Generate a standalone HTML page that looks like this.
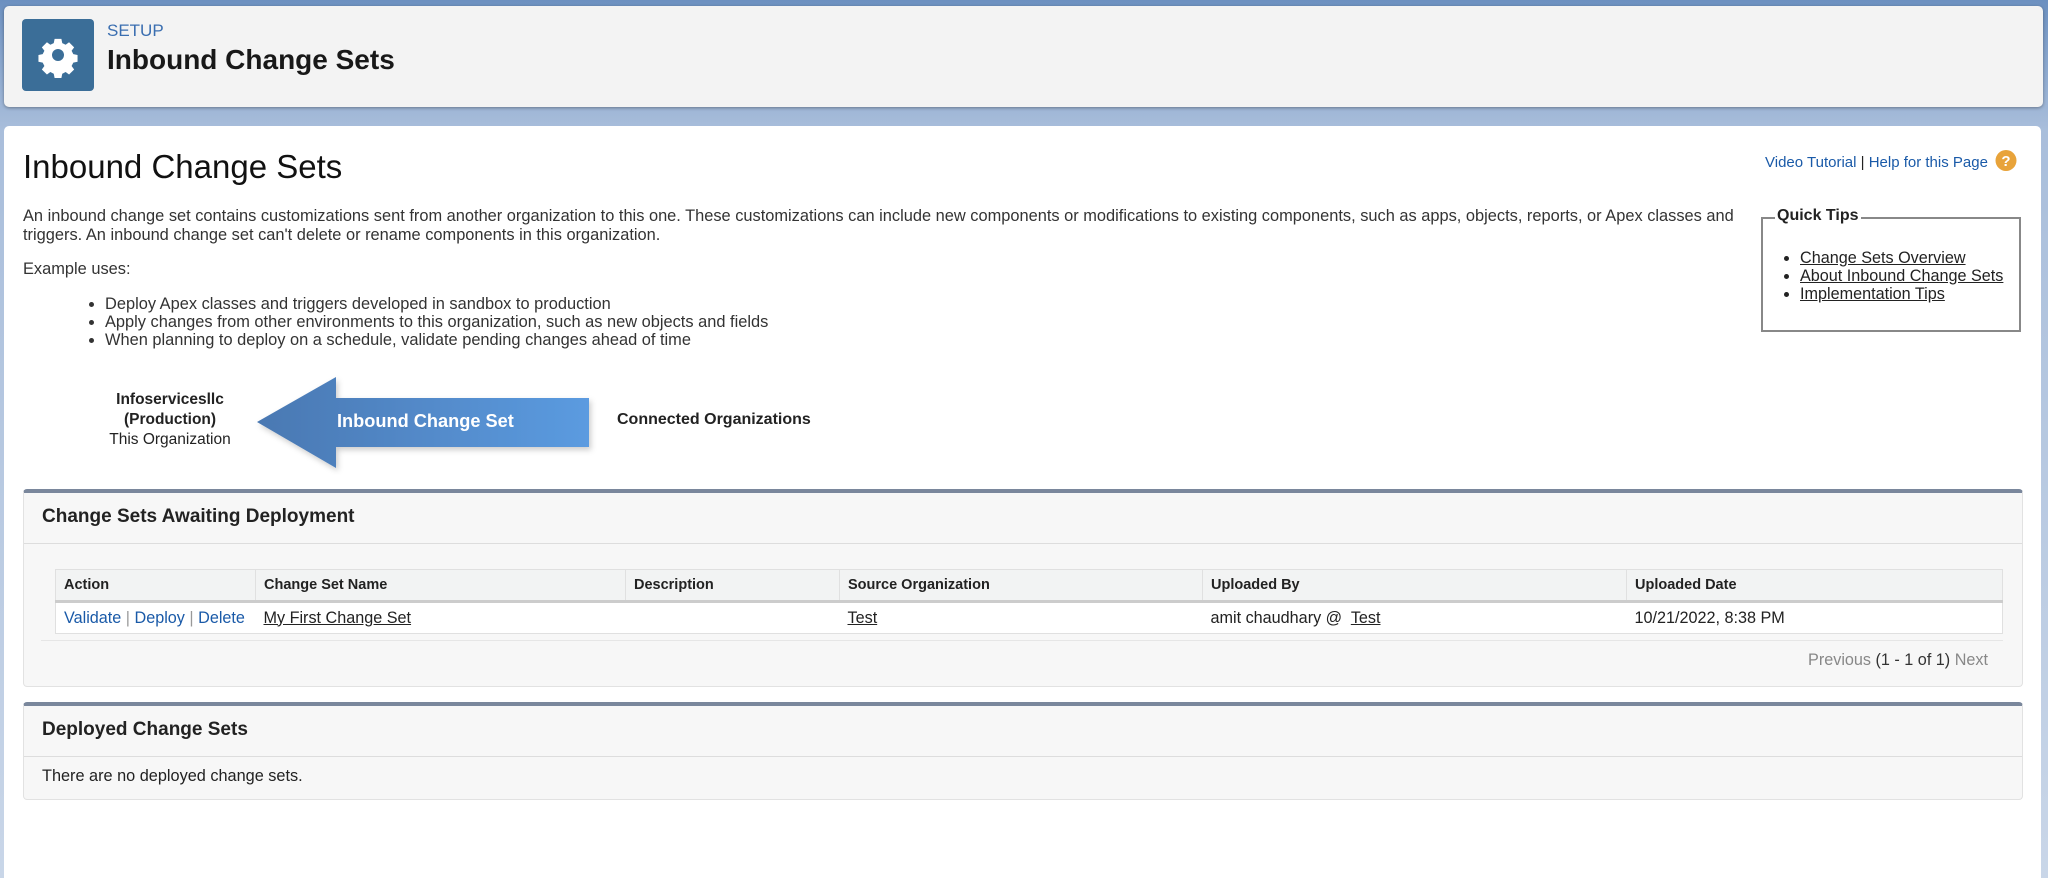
<!DOCTYPE html>
<html><head><meta charset="utf-8"><style>
*{box-sizing:border-box;margin:0;padding:0}
body{width:2048px;height:878px;overflow:hidden;font-family:"Liberation Sans",Arial,sans-serif;color:#222;background:#fff;position:relative}
.bg{position:absolute;left:0;top:0;width:2048px;height:878px;background:linear-gradient(#6c90c0,#a9bedb 130px,#c9d6e8 878px)}
.hdr{position:absolute;left:4px;top:6px;width:2039px;height:101px;background:#f3f3f3;border-radius:5px;box-shadow:0 1px 3px rgba(0,0,0,.35)}
.icon{position:absolute;left:18px;top:13px;width:72px;height:72px;background:#3b6e98;border-radius:4px}
.setup{position:absolute;left:103px;top:15px;font-size:17px;color:#3a6eb0}
.title{position:absolute;left:103px;top:38px;font-size:28px;font-weight:bold;color:#181818}
.panel{position:absolute;left:4px;top:126px;width:2037px;height:760px;background:#fff;border-radius:5px 5px 0 0}
.a{position:absolute;white-space:nowrap}
a,.lnk{color:#1a5aa8;text-decoration:none}
.u{text-decoration:underline;color:#222}
.sec{position:absolute;left:23px;width:2000px;background:#f7f7f7;border:1px solid #e2e2e2;border-top:4px solid #7a879c;border-radius:4px}
.sec .h{height:51px;border-bottom:1px solid #ddd;font-weight:bold;font-size:19px;padding:13px 18px}
table{border-collapse:collapse;font-size:16.2px}
</style></head><body>
<div class="bg"></div>
<div class="hdr">
 <div class="icon"><svg width="72" height="72" viewBox="0 0 72 72"><g fill="#fff" transform="translate(36,36) scale(0.85)">
 <path d="M-4-19h8l1 5 4 2 4-3 6 6-3 4 2 4 5 1v8l-5 1-2 4 3 4-6 6-4-3-4 2-1 5h-8l-1-5-4-2-4 3-6-6 3-4-2-4-5-1v-8l5-1 2-4-3-4 6-6 4 3 4-2z"/></g>
 <circle cx="36" cy="36" r="6" fill="#3b6e98"/></svg></div>
 <div class="setup">SETUP</div>
 <div class="title">Inbound Change Sets</div>
</div>
<div class="panel"></div>
<div class="a" style="left:23px;top:148px;font-size:33px;color:#111">Inbound Change Sets</div>
<div class="a" style="left:1765px;top:154px;font-size:15px"><span class="lnk">Video Tutorial</span> | <span class="lnk">Help for this Page</span></div>
<svg class="a" style="left:1995px;top:149px" width="22" height="23"><circle cx="11" cy="11.5" r="10.5" fill="#e8a33a"/><text x="11" y="17" font-size="15" font-weight="bold" fill="#fff" text-anchor="middle" font-family="Liberation Sans">?</text></svg>
<div class="a" style="left:23px;top:207px;font-size:16.4px;line-height:19px;color:#333">An inbound change set contains customizations sent from another organization to this one. These customizations can include new components or modifications to existing components, such as apps, objects, reports, or Apex classes and<br>triggers. An inbound change set can't delete or rename components in this organization.</div>
<div class="a" style="left:23px;top:260px;font-size:16.4px;color:#333">Example uses:</div>
<ul class="a" style="left:105px;top:295px;font-size:16.4px;line-height:18px;color:#333;list-style:disc">
<li>Deploy Apex classes and triggers developed in sandbox to production</li>
<li>Apply changes from other environments to this organization, such as new objects and fields</li>
<li>When planning to deploy on a schedule, validate pending changes ahead of time</li></ul>
<div class="a" style="left:1761px;top:217px;width:260px;height:115px;border:2px solid #888"></div>
<div class="a" style="left:1775px;top:207px;font-size:16px;font-weight:bold;background:#fff;padding:0 2px">Quick Tips</div>
<ul class="a" style="left:1800px;top:249px;font-size:16.2px;line-height:18px;color:#222">
<li class="u">Change Sets Overview</li><li class="u">About Inbound Change Sets</li><li class="u">Implementation Tips</li></ul>
<div class="a" style="left:90px;top:390px;width:160px;text-align:center;font-size:15.5px;line-height:20px"><b>Infoservicesllc<br>(Production)</b><br>This Organization</div>
<svg class="a" style="left:250px;top:370px" width="360" height="105"><defs><linearGradient id="g" x1="0" x2="1"><stop offset="0" stop-color="#4a78b2"/><stop offset="1" stop-color="#5b9be0"/></linearGradient><filter id="f"><feDropShadow dx="2" dy="3" stdDeviation="3" flood-opacity=".2"/></filter></defs>
<path d="M7 52L86 7V28H339V77H86V98Z" fill="url(#g)" filter="url(#f)"/>
<text x="87" y="57" font-size="18.2" font-weight="bold" fill="#fff" font-family="Liberation Sans">Inbound Change Set</text></svg>
<div class="a" style="left:617px;top:411px;font-size:16px;font-weight:bold">Connected Organizations</div>
<div class="sec" style="top:489px;height:198px">
 <div class="h">Change Sets Awaiting Deployment</div>
 <table style="position:absolute;left:31px;top:76px;width:1948px;border:1px solid #e0e0e0">
 <tr style="background:#f2f3f3;height:32px;border-bottom:3px solid #ccc;font-weight:bold;font-size:14.5px">
  <td style="width:200px;padding-left:8px;border-right:1px solid #e0e0e0">Action</td>
  <td style="width:370px;padding-left:8px;border-right:1px solid #e0e0e0">Change Set Name</td>
  <td style="width:214px;padding-left:8px;border-right:1px solid #e0e0e0">Description</td>
  <td style="width:363px;padding-left:8px;border-right:1px solid #e0e0e0">Source Organization</td>
  <td style="width:424px;padding-left:8px;border-right:1px solid #e0e0e0">Uploaded By</td>
  <td style="padding-left:8px">Uploaded Date</td></tr>
 <tr style="background:#fff;height:32px">
  <td style="padding-left:8px"><span class="lnk">Validate</span> <span style="color:#999">|</span> <span class="lnk">Deploy</span> <span style="color:#999">|</span> <span class="lnk">Delete</span></td>
  <td style="padding-left:8px"><span class="u">My First Change Set</span></td><td></td>
  <td style="padding-left:8px"><span class="u">Test</span></td>
  <td style="padding-left:8px">amit chaudhary @&nbsp; <span class="u">Test</span></td>
  <td style="padding-left:8px">10/21/2022, 8:38 PM</td></tr></table>
 <div style="position:absolute;left:17px;top:147px;width:1962px;border-top:1px solid #e6e6e6"></div>
 <div style="position:absolute;right:34px;top:158px;font-size:16.2px;color:#888">Previous <span style="color:#333">(1 - 1 of 1)</span> Next</div>
</div>
<div class="sec" style="top:702px;height:98px">
 <div class="h">Deployed Change Sets</div>
 <div style="padding:10px 18px;font-size:16.3px">There are no deployed change sets.</div>
</div>
</body></html>
